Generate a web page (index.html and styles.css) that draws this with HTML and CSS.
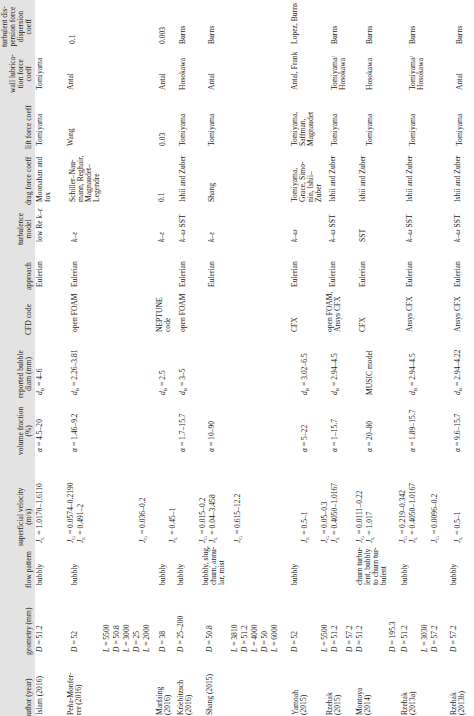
FILE: index.html
```html
<!DOCTYPE html>
<html lang="en">
<head>
<meta charset="utf-8">
<title>CFD bubbly flow studies</title>
<link rel="stylesheet" href="styles.css">
</head>
<body>
<div class="page">
<div class="grid">
  <div class="h"><span>author (year)</span></div>
  <div class="h"><span>geometry (mm)</span></div>
  <div class="h"><span>flow pattern</span></div>
  <div class="h"><span>superficial velocity<br>(m/s)</span></div>
  <div class="h"><span>volume fraction<br>(%)</span></div>
  <div class="h"><span>reported bubble<br>diam (mm)</span></div>
  <div class="h"><span>CFD code</span></div>
  <div class="h"><span>approach</span></div>
  <div class="h"><span>turbulence<br>model</span></div>
  <div class="h"><span>drag force coeff</span></div>
  <div class="h"><span>lift force coeff</span></div>
  <div class="h"><span>wall lubrica-<br>tion force<br>coeff</span></div>
  <div class="h"><span>turbulent dis-<br>persion force<br>dispersion<br>coeff</span></div>

  <!-- Islam -->
  <div class="c">Islam (2016)</div>
  <div class="c"><i>D</i> = 51.2</div>
  <div class="c">bubbly</div>
  <div class="c"><i>J</i><sub>L</sub> = 1.0170–1.6110</div>
  <div class="c"><i>α</i> = 4.5–20</div>
  <div class="c"><i>d</i><sub>B</sub> = 4–6</div>
  <div class="c"></div>
  <div class="c">Eulerian</div>
  <div class="c">low Re <i>k</i>–<i>ε</i></div>
  <div class="c">Moonahan and<br>fox</div>
  <div class="c">Tomiyama</div>
  <div class="c">Tomiyama</div>
  <div class="c"></div>

  <!-- Peña-Monferrer -->
  <div class="c">Peña-Monfer-<br>rer (2016)</div>
  <div class="c o4"><i>D</i> = 52</div>
  <div class="c o4">bubbly</div>
  <div class="c"><div class="ln"><i>J</i><sub>G</sub> = 0.0574–0.2190</div><div class="ln"><i>J</i><sub>L</sub> = 0.491–2</div></div>
  <div class="c o4"><i>α</i> = 1.46–9.2</div>
  <div class="c o4"><i>d</i><sub>B</sub> = 2.26–3.81</div>
  <div class="c o4">open FOAM</div>
  <div class="c o4">Eulerian</div>
  <div class="c o4"><i>k</i>–<i>ε</i></div>
  <div class="c o2">Schiller–Nau-<br>mann, Reghair,<br>Magnaudet–<br>Legendre</div>
  <div class="c">Wang</div>
  <div class="c">Antal</div>
  <div class="c o2">0.1</div>

  <!-- geometry continuation -->
  <div class="c"></div>
  <div class="c"><div class="ln"><i>L</i> = 5500</div><div class="ln"><i>D</i> = 50.8</div><div class="ln"><i>L</i> = 3000</div><div class="ln"><i>D</i> = 25</div><div class="ln"><i>L</i> = 2000</div></div>
  <div class="c"></div>
  <div class="c o36"><i>J</i><sub>G</sub> = 0.036–0.2</div>
  <div class="c"></div>
  <div class="c"></div>
  <div class="c"></div>
  <div class="c"></div>
  <div class="c"></div>
  <div class="c"></div>
  <div class="c"></div>
  <div class="c"></div>
  <div class="c"></div>

  <!-- Marfaing -->
  <div class="c">Marfaing<br>(2016)</div>
  <div class="c o3"><i>D</i> = 38</div>
  <div class="c o3">bubbly</div>
  <div class="c o13"><i>J</i><sub>L</sub> = 0.45–1</div>
  <div class="c"></div>
  <div class="c o3"><i>d</i><sub>B</sub> = 2.5</div>
  <div class="c">NEPTUNE<br>code</div>
  <div class="c"></div>
  <div class="c o2"><i>k</i>–<i>ε</i></div>
  <div class="c o2">0.1</div>
  <div class="c o3">0.03</div>
  <div class="c o3">Antal</div>
  <div class="c o3">0.003</div>

  <!-- Kriebitzsch -->
  <div class="c">Kriebitzsch<br>(2016)</div>
  <div class="c"><i>D</i> = 25–200</div>
  <div class="c">bubbly</div>
  <div class="c"></div>
  <div class="c o2"><i>α</i> = 1.7–15.7</div>
  <div class="c o2"><i>d</i><sub>B</sub> = 3–5</div>
  <div class="c o2">open FOAM</div>
  <div class="c o2">Eulerian</div>
  <div class="c o2"><i>k</i>–<i>ω</i> SST</div>
  <div class="c o2">Ishii and Zuber</div>
  <div class="c o2">Tomiyama</div>
  <div class="c o2">Hosokawa</div>
  <div class="c o2">Burns</div>

  <!-- Shang -->
  <div class="c o7">Shang (2015)</div>
  <div class="c o7"><i>D</i> = 50.8</div>
  <div class="c o3">bubbly, slug,<br>churn, annu-<br>lar, mist</div>
  <div class="c"><div class="ln"><i>J</i><sub>G</sub> = 0.015–0.2</div><div class="ln"><i>J</i><sub>L</sub> = 0.04–3.458</div></div>
  <div class="c o9"><i>α</i> = 10–90</div>
  <div class="c"></div>
  <div class="c"></div>
  <div class="c o9">Eulerian</div>
  <div class="c o9"><i>k</i>–<i>ε</i></div>
  <div class="c o9">Shang</div>
  <div class="c o9">Tomiyama</div>
  <div class="c o9">Antal</div>
  <div class="c o9">Burns</div>

  <!-- geometry continuation -->
  <div class="c"></div>
  <div class="c"><div class="ln"><i>L</i> = 3810</div><div class="ln"><i>D</i> = 51.2</div><div class="ln"><i>L</i> = 4000</div><div class="ln"><i>D</i> = 50</div><div class="ln"><i>L</i> = 6000</div></div>
  <div class="c"></div>
  <div class="c o3"><i>J</i><sub>G</sub> = 0.615–12.2</div>
  <div class="c"></div>
  <div class="c"></div>
  <div class="c"></div>
  <div class="c"></div>
  <div class="c"></div>
  <div class="c"></div>
  <div class="c"></div>
  <div class="c"></div>
  <div class="c"></div>

  <!-- Yamoah -->
  <div class="c o1">Yamoah<br>(2015)</div>
  <div class="c"><i>D</i> = 52</div>
  <div class="c">bubbly</div>
  <div class="c o10"><i>J</i><sub>L</sub> = 0.5–1</div>
  <div class="c o10"><i>α</i> = 5–22</div>
  <div class="c o10"><i>d</i><sub>B</sub> = 3.02–6.5</div>
  <div class="c">CFX</div>
  <div class="c">Eulerian</div>
  <div class="c"><i>k</i>–<i>ω</i></div>
  <div class="c">Tomiyama,<br>Grace, Simo-<br>nin, Ishii–<br>Zuber</div>
  <div class="c">Tomiyama,<br>Saffman,<br>Magnaudet</div>
  <div class="c">Antal, Frank</div>
  <div class="c">Lopez, Burns</div>

  <!-- Rzehak 2015 -->
  <div class="c o5">Rzehak<br>(2015)</div>
  <div class="c"><div class="ln"><i>L</i> = 5500</div><div class="ln"><i>D</i> = 51.2</div></div>
  <div class="c"></div>
  <div class="c"><div class="ln"><i>J</i><sub>G</sub> = 0.05–0.3</div><div class="ln"><i>J</i><sub>L</sub> = 0.4050–1.0167</div></div>
  <div class="c o10"><i>α</i> = 1–15.7</div>
  <div class="c o10"><i>d</i><sub>B</sub> = 2.94–4.5</div>
  <div class="c o5">open FOAM,<br>Ansys CFX</div>
  <div class="c o8">Eulerian</div>
  <div class="c o8"><i>k</i>–<i>ω</i> SST</div>
  <div class="c o8">Ishii and Zuber</div>
  <div class="c o10">Tomiyama</div>
  <div class="c o10">Tomiyama/<br>Hosokawa</div>
  <div class="c o10">Burns</div>

  <!-- geometry continuation -->
  <div class="c"></div>
  <div class="c"><i>D</i> = 57.2</div>
  <div class="c"></div>
  <div class="c"></div>
  <div class="c"></div>
  <div class="c"></div>
  <div class="c"></div>
  <div class="c"></div>
  <div class="c"></div>
  <div class="c"></div>
  <div class="c"></div>
  <div class="c"></div>
  <div class="c"></div>

  <!-- Montoya -->
  <div class="c">Montoya<br>(2014)</div>
  <div class="c"><i>D</i> = 51.2</div>
  <div class="c">churn turbu-<br>lent, bubbly<br>to churn tur-<br>bulent</div>
  <div class="c"><div class="ln"><i>J</i><sub>G</sub> = 0.0111–0.22</div><div class="ln"><i>J</i><sub>L</sub> = 1.017</div></div>
  <div class="c o10"><i>α</i> = 20–80</div>
  <div class="c o10">MUSIC model</div>
  <div class="c o3">CFX</div>
  <div class="c o3">Eulerian</div>
  <div class="c o3">SST</div>
  <div class="c o3">Ishii and Zuber</div>
  <div class="c o10">Tomiyama</div>
  <div class="c o10">Hosokawa</div>
  <div class="c o10">Burns</div>

  <!-- geometry continuation -->
  <div class="c"></div>
  <div class="c"><i>D</i> = 195.3</div>
  <div class="c"></div>
  <div class="c"></div>
  <div class="c"></div>
  <div class="c"></div>
  <div class="c"></div>
  <div class="c"></div>
  <div class="c"></div>
  <div class="c"></div>
  <div class="c"></div>
  <div class="c"></div>
  <div class="c"></div>

  <!-- Rzehak 2013a -->
  <div class="c o2">Rzehak<br>(2013a)</div>
  <div class="c o2"><i>D</i> = 51.2</div>
  <div class="c o2">bubbly</div>
  <div class="c"><div class="ln"><i>J</i><sub>G</sub> = 0.219–0.342</div><div class="ln"><i>J</i><sub>L</sub> = 0.4050–1.0167</div></div>
  <div class="c o10"><i>α</i> = 1.89–15.7</div>
  <div class="c o10"><i>d</i><sub>B</sub> = 2.94–4.5</div>
  <div class="c o7">Ansys CFX</div>
  <div class="c o7">Eulerian</div>
  <div class="c o7"><i>k</i>–<i>ω</i> SST</div>
  <div class="c o7">Ishii and Zuber</div>
  <div class="c o10">Tomiyama</div>
  <div class="c o10">Tomiyama/<br>Hosokawa</div>
  <div class="c o10">Burns</div>

  <!-- geometry continuation -->
  <div class="c"></div>
  <div class="c"><div class="ln"><i>L</i> = 3030</div><div class="ln"><i>D</i> = 57.2</div></div>
  <div class="c"></div>
  <div class="c o10"><i>J</i><sub>G</sub> = 0.0096–0.2</div>
  <div class="c"></div>
  <div class="c"></div>
  <div class="c"></div>
  <div class="c"></div>
  <div class="c"></div>
  <div class="c"></div>
  <div class="c"></div>
  <div class="c"></div>
  <div class="c"></div>

  <!-- Rzehak 2013b -->
  <div class="c o4">Rzehak<br>(2013b)</div>
  <div class="c o4"><i>D</i> = 57.2</div>
  <div class="c o4">bubbly</div>
  <div class="c o8"><i>J</i><sub>L</sub> = 0.5–1</div>
  <div class="c o8"><i>α</i> = 9.6–15.7</div>
  <div class="c o8"><i>d</i><sub>B</sub> = 2.94–4.22</div>
  <div class="c o8">Ansys CFX</div>
  <div class="c o8">Eulerian</div>
  <div class="c o8"><i>k</i>–<i>ω</i> SST</div>
  <div class="c o8">Ishii and Zuber</div>
  <div class="c o10">Tomiyama</div>
  <div class="c o10">Antal</div>
  <div class="c o10">Burns</div>
</div>
</div>
</body>
</html>
```

FILE: styles.css
```css
html, body {
  margin: 0;
  padding: 0;
  width: 474px;
  height: 716px;
  overflow: hidden;
  background: #ffffff;
}

.page {
  width: 716px;
  height: 474px;
  overflow: hidden;
  transform-origin: 0 0;
  transform: translate(0, 716px) rotate(-90deg);
  font-family: "Liberation Serif", "DejaVu Serif", serif;
  font-size: 7.6px;
  color: #1c1c1c;
}

.grid {
  display: grid;
  margin-left: -2px;
  grid-template-columns: 63px 67px 42px 91px 57px 63px 45px 45px 40px 56px 56px 46px 60px;
  grid-template-rows: 35px 31px 36px 53px 21px 22px 32px 60px 30px 25px 10px 33px 10px 22px 25px 40px;
}

.h {
  background: #e3e3e3;
  display: flex;
  align-items: flex-end;
  padding: 0 0 2px 0;
  line-height: 8px;
  white-space: nowrap;
}

.h span {
  display: inline-block;
  text-align: center;
}

.c {
  padding: 1px 3px 0;
  line-height: 8px;
  white-space: nowrap;
}

.ln {
  height: 10px;
}

sub {
  font-size: 5px;
  line-height: 0;
  vertical-align: -1.5px;
}

.o1 { padding-top: 2px; }
.o2 { padding-top: 3px; }
.o3 { padding-top: 4px; }
.o4 { padding-top: 5px; }
.o5 { padding-top: 6px; }
.o7 { padding-top: 8px; }
.o8 { padding-top: 9px; }
.o9 { padding-top: 10px; }
.o10 { padding-top: 11px; }
.o13 { padding-top: 14px; }
.o36 { padding-top: 37px; }
```
